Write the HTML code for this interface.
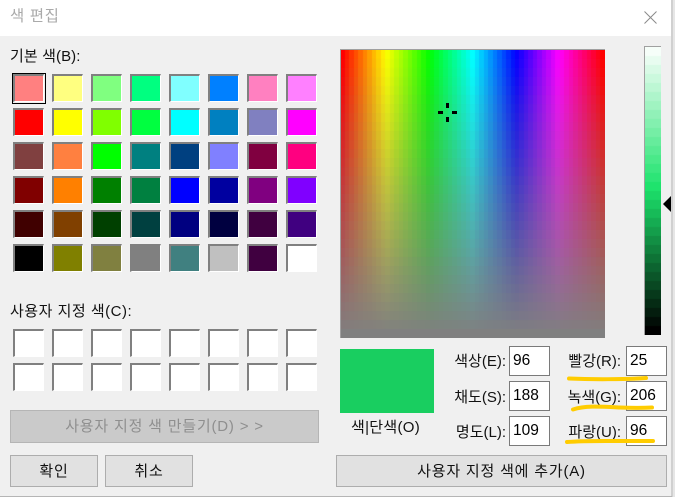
<!DOCTYPE html>
<html lang="ko"><head><meta charset="utf-8"><style>
html,body{margin:0;padding:0;width:675px;height:497px;overflow:hidden;background:#fff}
body{position:relative;font-family:"Liberation Sans","Noto Sans CJK KR","NanumGothic",sans-serif;font-size:15px;color:#111}
#body{position:absolute;left:0;top:36px;width:672px;height:460px;background:#f0f0f0}
#rb{position:absolute;left:671px;top:0;width:2px;height:497px;background:#d0d0d0}
#rw{position:absolute;left:673px;top:0;width:2px;height:497px;background:#e6e6e6}
#bb{position:absolute;left:0;top:496px;width:672px;height:1px;background:#b5b5b5}
.t{position:absolute;white-space:nowrap;line-height:20px}
.s{position:absolute;box-sizing:border-box;width:31px;height:28px;border-style:solid;border-width:2px 1px 1px 2px;border-color:#808080 #fff #fff #808080}
.b{position:absolute;box-sizing:border-box;border:1px solid #adadad;background:#e1e1e1;text-align:center;line-height:32px;white-space:nowrap;letter-spacing:.8px}
.i{position:absolute;box-sizing:border-box;border:1px solid #7a7a7a;background:#fff;padding-left:3px;line-height:28px;font-size:15.5px;color:#000}
.k{position:absolute;background:#000}
</style></head><body>
<div id="body"></div><div id="rb"></div><div id="rw"></div><div id="bb"></div>
<div class="t" style="left:10px;top:7px;font-size:15.5px;color:#aaa;letter-spacing:.6px">색 편집</div>
<svg style="position:absolute;left:644px;top:11px" width="13" height="13"><path d="M.5 .5L12.5 12.5M12.5 .5L.5 12.5" stroke="#8a8a8a" stroke-width="1" fill="none"/></svg>

<div class="t" style="left:10px;top:47px;letter-spacing:.1px">기본 색(B):</div>
<div style="position:absolute;left:12px;top:73px;width:32px;height:29px;border:1px solid #000"></div>

<div class="s" style="left:13px;top:74px;background:#FF8080"></div><div class="s" style="left:52px;top:74px;background:#FFFF80"></div><div class="s" style="left:91px;top:74px;background:#80FF80"></div><div class="s" style="left:130px;top:74px;background:#00FF80"></div><div class="s" style="left:169px;top:74px;background:#80FFFF"></div><div class="s" style="left:208px;top:74px;background:#0080FF"></div><div class="s" style="left:247px;top:74px;background:#FF80C0"></div><div class="s" style="left:286px;top:74px;background:#FF80FF"></div>
<div class="s" style="left:13px;top:108px;background:#FF0000"></div><div class="s" style="left:52px;top:108px;background:#FFFF00"></div><div class="s" style="left:91px;top:108px;background:#80FF00"></div><div class="s" style="left:130px;top:108px;background:#00FF40"></div><div class="s" style="left:169px;top:108px;background:#00FFFF"></div><div class="s" style="left:208px;top:108px;background:#0080C0"></div><div class="s" style="left:247px;top:108px;background:#8080C0"></div><div class="s" style="left:286px;top:108px;background:#FF00FF"></div>
<div class="s" style="left:13px;top:142px;background:#804040"></div><div class="s" style="left:52px;top:142px;background:#FF8040"></div><div class="s" style="left:91px;top:142px;background:#00FF00"></div><div class="s" style="left:130px;top:142px;background:#008080"></div><div class="s" style="left:169px;top:142px;background:#004080"></div><div class="s" style="left:208px;top:142px;background:#8080FF"></div><div class="s" style="left:247px;top:142px;background:#800040"></div><div class="s" style="left:286px;top:142px;background:#FF0080"></div>
<div class="s" style="left:13px;top:176px;background:#800000"></div><div class="s" style="left:52px;top:176px;background:#FF8000"></div><div class="s" style="left:91px;top:176px;background:#008000"></div><div class="s" style="left:130px;top:176px;background:#008040"></div><div class="s" style="left:169px;top:176px;background:#0000FF"></div><div class="s" style="left:208px;top:176px;background:#0000A0"></div><div class="s" style="left:247px;top:176px;background:#800080"></div><div class="s" style="left:286px;top:176px;background:#8000FF"></div>
<div class="s" style="left:13px;top:210px;background:#400000"></div><div class="s" style="left:52px;top:210px;background:#804000"></div><div class="s" style="left:91px;top:210px;background:#004000"></div><div class="s" style="left:130px;top:210px;background:#004040"></div><div class="s" style="left:169px;top:210px;background:#000080"></div><div class="s" style="left:208px;top:210px;background:#000040"></div><div class="s" style="left:247px;top:210px;background:#400040"></div><div class="s" style="left:286px;top:210px;background:#400080"></div>
<div class="s" style="left:13px;top:244px;background:#000000"></div><div class="s" style="left:52px;top:244px;background:#808000"></div><div class="s" style="left:91px;top:244px;background:#808040"></div><div class="s" style="left:130px;top:244px;background:#808080"></div><div class="s" style="left:169px;top:244px;background:#408080"></div><div class="s" style="left:208px;top:244px;background:#C0C0C0"></div><div class="s" style="left:247px;top:244px;background:#400040"></div><div class="s" style="left:286px;top:244px;background:#FFFFFF"></div>

<div class="t" style="left:10px;top:302px;letter-spacing:.5px">사용자 지정 색(C):</div>
<div class="s" style="left:13px;top:329px;background:#fff"></div><div class="s" style="left:52px;top:329px;background:#fff"></div><div class="s" style="left:91px;top:329px;background:#fff"></div><div class="s" style="left:130px;top:329px;background:#fff"></div><div class="s" style="left:169px;top:329px;background:#fff"></div><div class="s" style="left:208px;top:329px;background:#fff"></div><div class="s" style="left:247px;top:329px;background:#fff"></div><div class="s" style="left:286px;top:329px;background:#fff"></div>
<div class="s" style="left:13px;top:363px;background:#fff"></div><div class="s" style="left:52px;top:363px;background:#fff"></div><div class="s" style="left:91px;top:363px;background:#fff"></div><div class="s" style="left:130px;top:363px;background:#fff"></div><div class="s" style="left:169px;top:363px;background:#fff"></div><div class="s" style="left:208px;top:363px;background:#fff"></div><div class="s" style="left:247px;top:363px;background:#fff"></div><div class="s" style="left:286px;top:363px;background:#fff"></div>

<div class="b" style="left:10px;top:410px;width:309px;height:33px;background:#cacaca;border-color:#b5b5b5;color:#8f8f8f;line-height:32px">사용자 지정 색 만들기(D) &gt; &gt;</div>
<div class="b" style="left:10px;top:455px;width:88px;height:32px">확인</div>
<div class="b" style="left:105px;top:455px;width:88px;height:32px">취소</div>
<div class="b" style="left:336px;top:455px;width:331px;height:32px">사용자 지정 색에 추가(A)</div>

<div style="position:absolute;left:340px;top:49px;border-top:1px solid #a0a0a0;border-left:1px solid #a0a0a0;box-sizing:content-box;width:264px;height:288px;background:linear-gradient(to bottom,rgba(128,128,128,0),#808080),linear-gradient(to right,#f00,#ff0 16.67%,#0f0 33.33%,#0ff 50%,#00f 66.67%,#f0f 83.33%,#f00)"><canvas id="c1" width="264" height="288" style="display:block"></canvas></div>
<div class="k" style="left:446px;top:103px;width:3px;height:5px"></div>
<div class="k" style="left:446px;top:117px;width:3px;height:5px"></div>
<div class="k" style="left:438px;top:111px;width:5px;height:3px"></div>
<div class="k" style="left:452px;top:111px;width:5px;height:3px"></div>

<div style="position:absolute;left:644px;top:46px;width:16px;height:288px;border-top:1px solid #a0a0a0;border-left:1px solid #a0a0a0;background:linear-gradient(to bottom,#fff,#19ce60 50%,#000)"><canvas id="c2" width="16" height="288" style="display:block"></canvas></div>
<svg style="position:absolute;left:663px;top:196px" width="9" height="16"><path d="M0 8L8 0V16Z" fill="#000"/></svg>

<div style="position:absolute;left:340px;top:349px;width:94px;height:64px;background:#19ce60"></div>
<div class="t" style="left:351px;top:418px;letter-spacing:.3px">색|단색(O)</div>

<div class="t" style="right:169px;top:352px">색상(E):</div>
<div class="t" style="right:169px;top:388px">채도(S):</div>
<div class="t" style="right:169px;top:423px">명도(L):</div>
<div class="t" style="right:54px;top:352px">빨강(R):</div>
<div class="t" style="right:54px;top:388px">녹색(G):</div>
<div class="t" style="right:54px;top:423px">파랑(U):</div>

<div class="i" style="left:509px;top:346px;width:41px;height:30px">96</div>
<div class="i" style="left:509px;top:381px;width:41px;height:30px">188</div>
<div class="i" style="left:509px;top:416px;width:41px;height:30px">109</div>
<div class="i" style="left:626px;top:346px;width:41px;height:30px">25</div>
<div class="i" style="left:626px;top:381px;width:41px;height:30px">206</div>
<div class="i" style="left:626px;top:416px;width:41px;height:30px">96</div>

<svg style="position:absolute;left:0;top:0" width="675" height="497">
<path d="M569 378.500C590 379.500 625 379.500 646 378" stroke="#ffcc00" stroke-width="4" fill="none" stroke-linecap="round"/>
<path d="M573 409.500C585 405.500 600 406.500 620 407.500C632 408 644 408 652 407.500" stroke="#ffcc00" stroke-width="4" fill="none" stroke-linecap="round"/>
<path d="M567 442C585 440.500 605 441 625 441C635 441 645 441 653 441" stroke="#ffcc00" stroke-width="4" fill="none" stroke-linecap="round"/>
</svg>
<script>
(function(){
var c=document.getElementById('c1').getContext('2d');
for(var y=0;y<32;y++){for(var x=0;x<59;x++){
var h=x/58*360,s=100*(1-y/31);
c.fillStyle='hsl('+h+','+s+'%,50%)';
c.fillRect(Math.floor(x*264/59),y*9,Math.ceil(264/59)+1,9);
}}
var d=document.getElementById('c2').getContext('2d');
for(var i=0;i<32;i++){
d.fillStyle='hsl(144,78%,'+(98-i*98/31)+'%)';
d.fillRect(0,i*9,16,9);
}
})();
</script>
</body></html>
